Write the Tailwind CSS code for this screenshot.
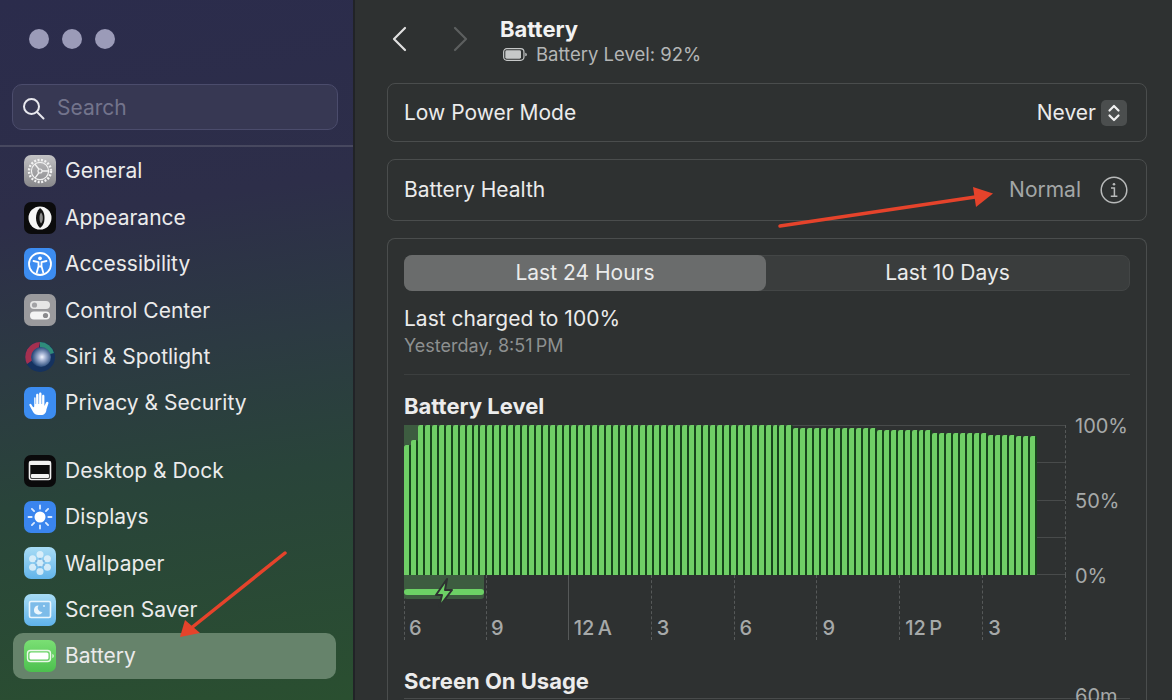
<!doctype html>
<html>
<head>
<meta charset="utf-8">
<script src="https://cdn.jsdelivr.net/npm/@tailwindcss/browser@4"></script>
</head>
<body class="m-0 bg-[#2e3131]">
<div class="relative flex w-[1172px] h-[700px] overflow-hidden font-['Inter','Liberation_Sans',sans-serif] text-[21px] text-[#ebebeb]">

  <!-- Sidebar -->
  <aside class="w-[355px] h-full shrink-0 border-r-2 border-[#212327] bg-[linear-gradient(172deg,#2b2c4c_0%,#2d2e49_30%,#2c3a42_50%,#29443a_68%,#2a4f30_100%)]">
    <div class="flex gap-[13px] pl-[29px] pt-[29px] h-[84px]">
      <span class="w-5 h-5 rounded-full bg-[#9b9bb8]"></span>
      <span class="w-5 h-5 rounded-full bg-[#9b9bb8]"></span>
      <span class="w-5 h-5 rounded-full bg-[#9b9bb8]"></span>
    </div>
    <div class="mx-3 w-[326px] h-[46px] flex items-center gap-[12px] pl-[9px] pt-[2px] rounded-[10px] border border-[#4b4c6c] bg-[#373853]">
      <svg class="w-[23px] h-[23px]" viewBox="0 0 23 23" fill="none" stroke="#e8e8ee" stroke-width="2" stroke-linecap="round"><circle cx="9.5" cy="9.5" r="7.5"/><path d="M15 15l6.5 6.5"/></svg>
      <span class="text-[#73748c]">Search</span>
    </div>
    <div class="mt-[15px] h-[2px] bg-[#47485f]"></div>

    <nav class="mt-[1px] px-[13px]">
      <a class="flex items-center gap-[9px] h-[46.4px] pl-[11px]">
        <svg class="w-8 h-8" viewBox="0 0 32 32"><defs><linearGradient id="g1" x1="0" y1="0" x2="0" y2="1"><stop offset="0" stop-color="#c2c2c4"/><stop offset="1" stop-color="#87878a"/></linearGradient></defs><rect width="32" height="32" rx="7" fill="url(#g1)"/><circle cx="16" cy="16" r="11" fill="none" stroke="#f2f2f2" stroke-width="2.4" stroke-dasharray="2 1.5"/><circle cx="16" cy="16" r="8.6" fill="none" stroke="#f2f2f2" stroke-width="1.2"/><circle cx="16" cy="16" r="2" fill="none" stroke="#f2f2f2" stroke-width="1.2"/><path d="M18 16h6.6M15 14.3L10.8 9M15 17.7l-4.2 5.6" stroke="#f2f2f2" stroke-width="1.4" fill="none"/></svg>
        <span>General</span>
      </a>
      <a class="flex items-center gap-[9px] h-[46.4px] pl-[11px]">
        <svg class="w-8 h-8" viewBox="0 0 32 32"><rect width="32" height="32" rx="7" fill="#0b0b0c"/><circle cx="16" cy="16" r="11.5" fill="#f5f5f5"/><path d="M16 6c-3 3-4 6.500-4 10s1 7 4 10c3.500-2.500 4.500-6 4.500-10S19.500 8.500 16 6z" fill="#111"/><path d="M17 10.500c1.500 1.500 1.800 3.500 1.800 5.500s-.3 4-1.800 5.500c-1.200-1.500-1.500-3.500-1.500-5.500s.3-4 1.500-5.500z" fill="#8a8a8a"/></svg>
        <span>Appearance</span>
      </a>
      <a class="flex items-center gap-[9px] h-[46.4px] pl-[11px]">
        <svg class="w-8 h-8" viewBox="0 0 32 32"><rect width="32" height="32" rx="7" fill="#3c8cf0"/><circle cx="16" cy="16" r="11" fill="none" stroke="#fff" stroke-width="1.8"/><circle cx="16" cy="10.3" r="1.9" fill="#fff"/><path d="M9.500 13l5 1.200v4l-1.800 6.500M22.500 13l-5 1.200v4l1.800 6.500M14.500 18.500h3" fill="none" stroke="#fff" stroke-width="1.8" stroke-linecap="round"/></svg>
        <span>Accessibility</span>
      </a>
      <a class="flex items-center gap-[9px] h-[46.4px] pl-[11px]">
        <svg class="w-8 h-8" viewBox="0 0 32 32"><rect width="32" height="32" rx="7" fill="#9a9a9d"/><rect x="6" y="7" width="20" height="8" rx="4" fill="#e6e6e6"/><circle cx="10.500" cy="11" r="2.600" fill="#a3a3a6"/><rect x="6" y="17.500" width="20" height="8" rx="4" fill="#f4f4f4"/><circle cx="21.500" cy="21.500" r="2.600" fill="#8a8a8d"/></svg>
        <span>Control Center</span>
      </a>
      <a class="flex items-center gap-[9px] h-[46.4px] pl-[11px]">
        <svg class="w-8 h-8" viewBox="0 0 32 32"><defs><radialGradient id="g2" cx=".55" cy=".5" r=".5"><stop offset="0" stop-color="#f4f6ff"/><stop offset=".35" stop-color="#a9b7d6"/><stop offset="1" stop-color="#2a4c7c"/></radialGradient></defs><circle cx="16" cy="16" r="15" fill="#15325f"/><path d="M16 1A15 15 0 0 0 3 23l10-7z" fill="#a5304f"/><path d="M16 1a15 15 0 0 1 14 11l-14 4z" fill="#2f8c7a"/><circle cx="17" cy="16" r="10" fill="url(#g2)"/></svg>
        <span>Siri &amp; Spotlight</span>
      </a>
      <a class="flex items-center gap-[9px] h-[46.4px] pl-[11px]">
        <svg class="w-8 h-8" viewBox="0 0 32 32"><rect width="32" height="32" rx="7" fill="#3c8cf0"/><path d="M10.200 11.500v8c0 .7-1 1-1.400.3l-1.400-2.400c-.9-1.300-2.600-.3-1.900 1l3.600 6.600c1 1.800 3 3 5.400 3h2.500c3.200 0 5.400-2.400 5.400-5.600l2-6c.5-1.600-1.600-2.500-2.300-1l-1.700 3.600V9c0-1.800-2.300-1.800-2.300 0v8h-.6V6.800c0-1.900-2.400-1.900-2.400 0V17h-.6V8c0-1.800-2.400-1.800-2.400 0v9h-.5v-5.500c0-1.800-1.400-1.800-1.400 0z" fill="#fff"/></svg>
        <span>Privacy &amp; Security</span>
      </a>

      <div class="h-[21px]"></div>

      <a class="flex items-center gap-[9px] h-[46.4px] pl-[11px]">
        <svg class="w-8 h-8" viewBox="0 0 32 32"><rect width="32" height="32" rx="7" fill="#0a0a0b"/><rect x="5.500" y="6.500" width="21" height="18" rx="2" fill="none" stroke="#f0f0f0" stroke-width="1.6"/><rect x="5" y="6" width="22" height="4" rx="1.500" fill="#f0f0f0"/><rect x="7" y="19" width="18" height="4" rx="1" fill="#f0f0f0"/></svg>
        <span>Desktop &amp; Dock</span>
      </a>
      <a class="flex items-center gap-[9px] h-[46.4px] pl-[11px]">
        <svg class="w-8 h-8" viewBox="0 0 32 32"><rect width="32" height="32" rx="7" fill="#3a85ee"/><circle cx="16" cy="16" r="5.500" fill="#fff"/><path d="M16 4.500v3.200M16 24.300v3.200M4.500 16h3.200M24.300 16h3.200M7.900 7.900l2.200 2.200M21.900 21.900l2.200 2.200M7.900 24.100l2.200-2.200M21.900 10.100l2.200-2.200" stroke="#dcebff" stroke-width="1.8" stroke-linecap="round"/></svg>
        <span>Displays</span>
      </a>
      <a class="flex items-center gap-[9px] h-[46.4px] pl-[11px]">
        <svg class="w-8 h-8" viewBox="0 0 32 32"><defs><linearGradient id="g3" x1="0" y1="0" x2="0" y2="1"><stop offset="0" stop-color="#a8dcf5"/><stop offset="1" stop-color="#62b4ea"/></linearGradient></defs><rect width="32" height="32" rx="7" fill="url(#g3)"/><g fill="#e9f5fb" opacity=".8"><circle cx="16" cy="16" r="3.500"/><circle cx="16" cy="7.500" r="3.500"/><circle cx="16" cy="24.500" r="3.500"/><circle cx="8.600" cy="11.800" r="3.500"/><circle cx="23.400" cy="11.800" r="3.500"/><circle cx="8.600" cy="20.200" r="3.500"/><circle cx="23.400" cy="20.200" r="3.500"/></g><g fill="#7fb3de"><circle cx="12.300" cy="14" r="1.100"/><circle cx="19.700" cy="14" r="1.100"/><circle cx="12.300" cy="18" r="1.100"/><circle cx="19.700" cy="18" r="1.100"/><circle cx="16" cy="11.800" r="1.100"/><circle cx="16" cy="20.200" r="1.100"/></g></svg>
        <span>Wallpaper</span>
      </a>
      <a class="flex items-center gap-[9px] h-[46.4px] pl-[11px]">
        <svg class="w-8 h-8" viewBox="0 0 32 32"><defs><linearGradient id="g4" x1="0" y1="0" x2="0" y2="1"><stop offset="0" stop-color="#a8dcf5"/><stop offset="1" stop-color="#5fb2ea"/></linearGradient></defs><rect width="32" height="32" rx="7" fill="url(#g4)"/><rect x="5.500" y="7.500" width="21" height="16" rx="1.500" fill="#7dbce9" stroke="#eaf6fd" stroke-width="1.6"/><path d="M14.500 11.500a4.500 4.500 0 1 0 4 6.500 4.200 4.200 0 0 1-4-6.500z" fill="#eaf6fd"/><circle cx="20" cy="12" r=".9" fill="#eaf6fd"/></svg>
        <span>Screen Saver</span>
      </a>
      <a class="flex items-center gap-[9px] h-[46.4px] w-[323px] pl-[11px] rounded-[10px] bg-[#66836b]">
        <svg class="w-8 h-8" viewBox="0 0 32 32"><defs><linearGradient id="g5" x1="0" y1="0" x2="0" y2="1"><stop offset="0" stop-color="#7adf74"/><stop offset="1" stop-color="#4cc04e"/></linearGradient></defs><rect width="32" height="32" rx="7" fill="url(#g5)"/><rect x="3.500" y="10.500" width="23" height="11" rx="3" fill="none" stroke="#eaf8e8" stroke-width="1.400"/><rect x="5.500" y="12.500" width="19" height="7" rx="1.500" fill="#fff"/><path d="M28.300 14v4c1-.3 1.600-1 1.600-2s-.6-1.700-1.600-2z" fill="#d6f1d2"/></svg>
        <span>Battery</span>
      </a>
    </nav>
  </aside>

  <!-- Main -->
  <main class="flex-1 h-full pl-[32px] pr-[25px] overflow-hidden">
    <header class="h-[83px] flex items-start pt-[16px]">
      <svg class="w-[20px] h-[28px] mt-[9px] ml-[3px]" viewBox="0 0 20 28" fill="none" stroke="#e0e0e0" stroke-width="2.2" stroke-linecap="round" stroke-linejoin="round"><path d="M15 3L4 14l11 11"/></svg>
      <svg class="w-[20px] h-[28px] mt-[9px] ml-[40px]" viewBox="0 0 20 28" fill="none" stroke="#5c5f5f" stroke-width="2.2" stroke-linecap="round" stroke-linejoin="round"><path d="M5 3l11 11L5 25"/></svg>
      <div class="ml-[30px]">
        <div class="font-bold text-[22px] leading-[26px] text-[#f2f2f2]">Battery</div>
        <div class="flex items-center gap-[9px] ml-[3px] mt-[1px] leading-[22px] text-[18.5px] text-[#b4b6b6]">
          <svg class="w-[24px] h-[13px]" viewBox="0 0 26 14"><rect x=".7" y=".7" width="22" height="12.600" rx="3.500" fill="none" stroke="#c6c8c8" stroke-width="1.300"/><rect x="2.500" y="2.500" width="17" height="9" rx="1.500" fill="#c6c8c8"/><path d="M24.200 5v4c1-.3 1.600-1 1.600-2s-.6-1.700-1.600-2z" fill="#c6c8c8"/></svg>
          <span>Battery Level: 92%</span>
        </div>
      </div>
    </header>

    <section class="h-[59px] flex items-center justify-between rounded-[8px] border border-[#4a4d4d] pl-[16px] pr-[19px]">
      <span>Low Power Mode</span>
      <div class="flex items-center gap-[5px]">
        <span>Never</span>
        <span class="w-[26px] h-[26px] rounded-[5px] bg-[#4b4e4e] flex items-center justify-center">
          <svg class="w-[14px] h-[20px]" viewBox="0 0 14 20" fill="none" stroke="#f0f0f0" stroke-width="2.2" stroke-linecap="round" stroke-linejoin="round"><path d="M2.500 7.500L7 3l4.500 4.500M2.500 12.500L7 17l4.500-4.500"/></svg>
        </span>
      </div>
    </section>

    <section class="mt-[17px] h-[62px] flex items-center justify-between rounded-[8px] border border-[#4a4d4d] pl-[16px] pr-[18px]">
      <span>Battery Health</span>
      <div class="flex items-center gap-[19px]">
        <span class="text-[#a3a6a6]">Normal</span>
        <svg class="w-[28px] h-[28px]" viewBox="0 0 28 28" fill="none" stroke="#b8baba" stroke-width="1.500"><circle cx="14" cy="14" r="12.800"/><circle cx="14" cy="8.200" r="1.300" fill="#b8baba" stroke="none"/><path d="M11 12h3.400v8M10.800 20.300h6.600"/></svg>
      </div>
    </section>

    <section class="mt-[17px] rounded-t-[8px] border border-b-0 border-[#4a4d4d] px-[16px] pt-[16px] h-[480px]">
      <div class="flex h-[36px] rounded-[8px] border border-[#434646] bg-[#3a3d3d] text-center leading-[34px]">
        <div class="w-[362px] -my-px -ml-px h-[36px] rounded-[8px] bg-[#6a6c6c] leading-[36px]">Last 24 Hours</div>
        <div class="flex-1">Last 10 Days</div>
      </div>
      <div class="mt-[14px] leading-[28px]">Last charged to 100%</div>
      <div class="mt-[1px] leading-[24px] text-[18px] text-[#8d9090]">Yesterday, 8:51&#8239;PM</div>
      <div class="mt-[16px] h-px bg-[#3c3f3f]"></div>

      <div class="mt-[18px] leading-[26px] font-bold text-[22px] text-[#ececec]">Battery Level</div>

      <div class="relative mt-[6px] w-[662px]">
        <div class="relative h-[150px] border-r border-dashed border-[#565959]">
          <div class="absolute inset-0 flex flex-col justify-between">
            <div class="h-px bg-[#484b4b]"></div><div class="h-px bg-[#484b4b]"></div><div class="h-px bg-[#484b4b]"></div><div class="h-px bg-[#484b4b]"></div><div class="h-px bg-[#484b4b]"></div>
          </div>
          <div class="absolute left-0 top-0 w-[14px] h-[20px] bg-[#3d5c40]"></div>
          <div id="bars" class="absolute left-0 bottom-0 h-full w-[633px] flex items-end"></div>
        </div>

        <div class="relative flex h-[65px] text-[20px] leading-[24px] font-medium text-[#a6a9a9]">
          <div class="flex-1 flex items-end pl-[4px] border-l border-dashed border-[#565959]"><span>6</span></div>
          <div class="flex-1 flex items-end pl-[4px] border-l border-dashed border-[#565959]"><span>9</span></div>
          <div class="flex-1 flex items-end pl-[5px] border-l border-[#565959]"><span>12&#8239;A</span></div>
          <div class="flex-1 flex items-end pl-[5px] border-l border-dashed border-[#565959]"><span>3</span></div>
          <div class="flex-1 flex items-end pl-[5px] border-l border-dashed border-[#565959]"><span>6</span></div>
          <div class="flex-1 flex items-end pl-[5px] border-l border-dashed border-[#565959]"><span>9</span></div>
          <div class="flex-1 flex items-end pl-[5px] border-l border-dashed border-[#565959]"><span>12&#8239;P</span></div>
          <div class="flex-1 flex items-end pl-[5px] border-x border-dashed border-[#565959]"><span>3</span></div>
          <div class="absolute left-0 top-0 w-[80px] h-[24px] rounded-b-[3px] bg-[#3d5c40]">
            <div class="absolute left-0 top-[14px] w-full h-[6px] rounded-full bg-[#6cd165]"></div>
            <svg class="absolute left-[29px] top-[3px] w-[22px] h-[30px]" viewBox="0 0 22 30"><path d="M14 1L3 17h6l-3 12L19 12h-7z" fill="#6cd165" stroke="#2e3131" stroke-width="2" stroke-linejoin="round"/></svg>
          </div>
        </div>

        <div class="absolute left-[671px] top-[-12px] h-[176px] flex flex-col justify-between leading-[26px] text-[20px] text-[#a6a9a9]">
          <span>100%</span><span>50%</span><span>0%</span>
        </div>
      </div>

      <div class="relative mt-[28px] leading-[26px] font-bold text-[22px] text-[#ececec]">Screen On Usage
        <span class="absolute left-[671px] top-[15px] font-normal text-[20px] text-[#a6a9a9]">60m</span>
      </div>
      <div class="mt-[4px] h-px bg-[#484b4b]"></div>
    </section>
  </main>

  <!-- Annotation arrows over the screenshot -->
  <svg class="absolute left-0 top-0 w-[1172px] h-[700px] pointer-events-none" viewBox="0 0 1172 700">
    <path d="M780 226L982 196" stroke="#e5432b" stroke-width="3.500" stroke-linecap="round"/>
    <path d="M993 193.500L973 187l3 20z" fill="#e5432b"/>
    <path d="M285 553L190 629" stroke="#e5432b" stroke-width="3.500" stroke-linecap="round"/>
    <path d="M180 637l5-17 15 13z" fill="#e5432b"/>
  </svg>
</div>
<script>
  var n = 91, box = document.getElementById('bars');
  function h(i) {
    if (i === 0) return 130;
    if (i === 1) return 135;
    if (i < 56) return 150;
    if (i < 68) return 147;
    if (i < 76) return 145;
    if (i < 84) return 142;
    if (i < 88) return 140;
    return 139;
  }
  for (var i = 0; i < n; i++) {
    var d = document.createElement('div');
    d.className = 'flex-1 rounded-t-[2px] bg-[#6fcf66] border-r-2 border-[#17461c]';
    d.style.height = h(i) + 'px';
    box.appendChild(d);
  }
</script>
</body>
</html>
